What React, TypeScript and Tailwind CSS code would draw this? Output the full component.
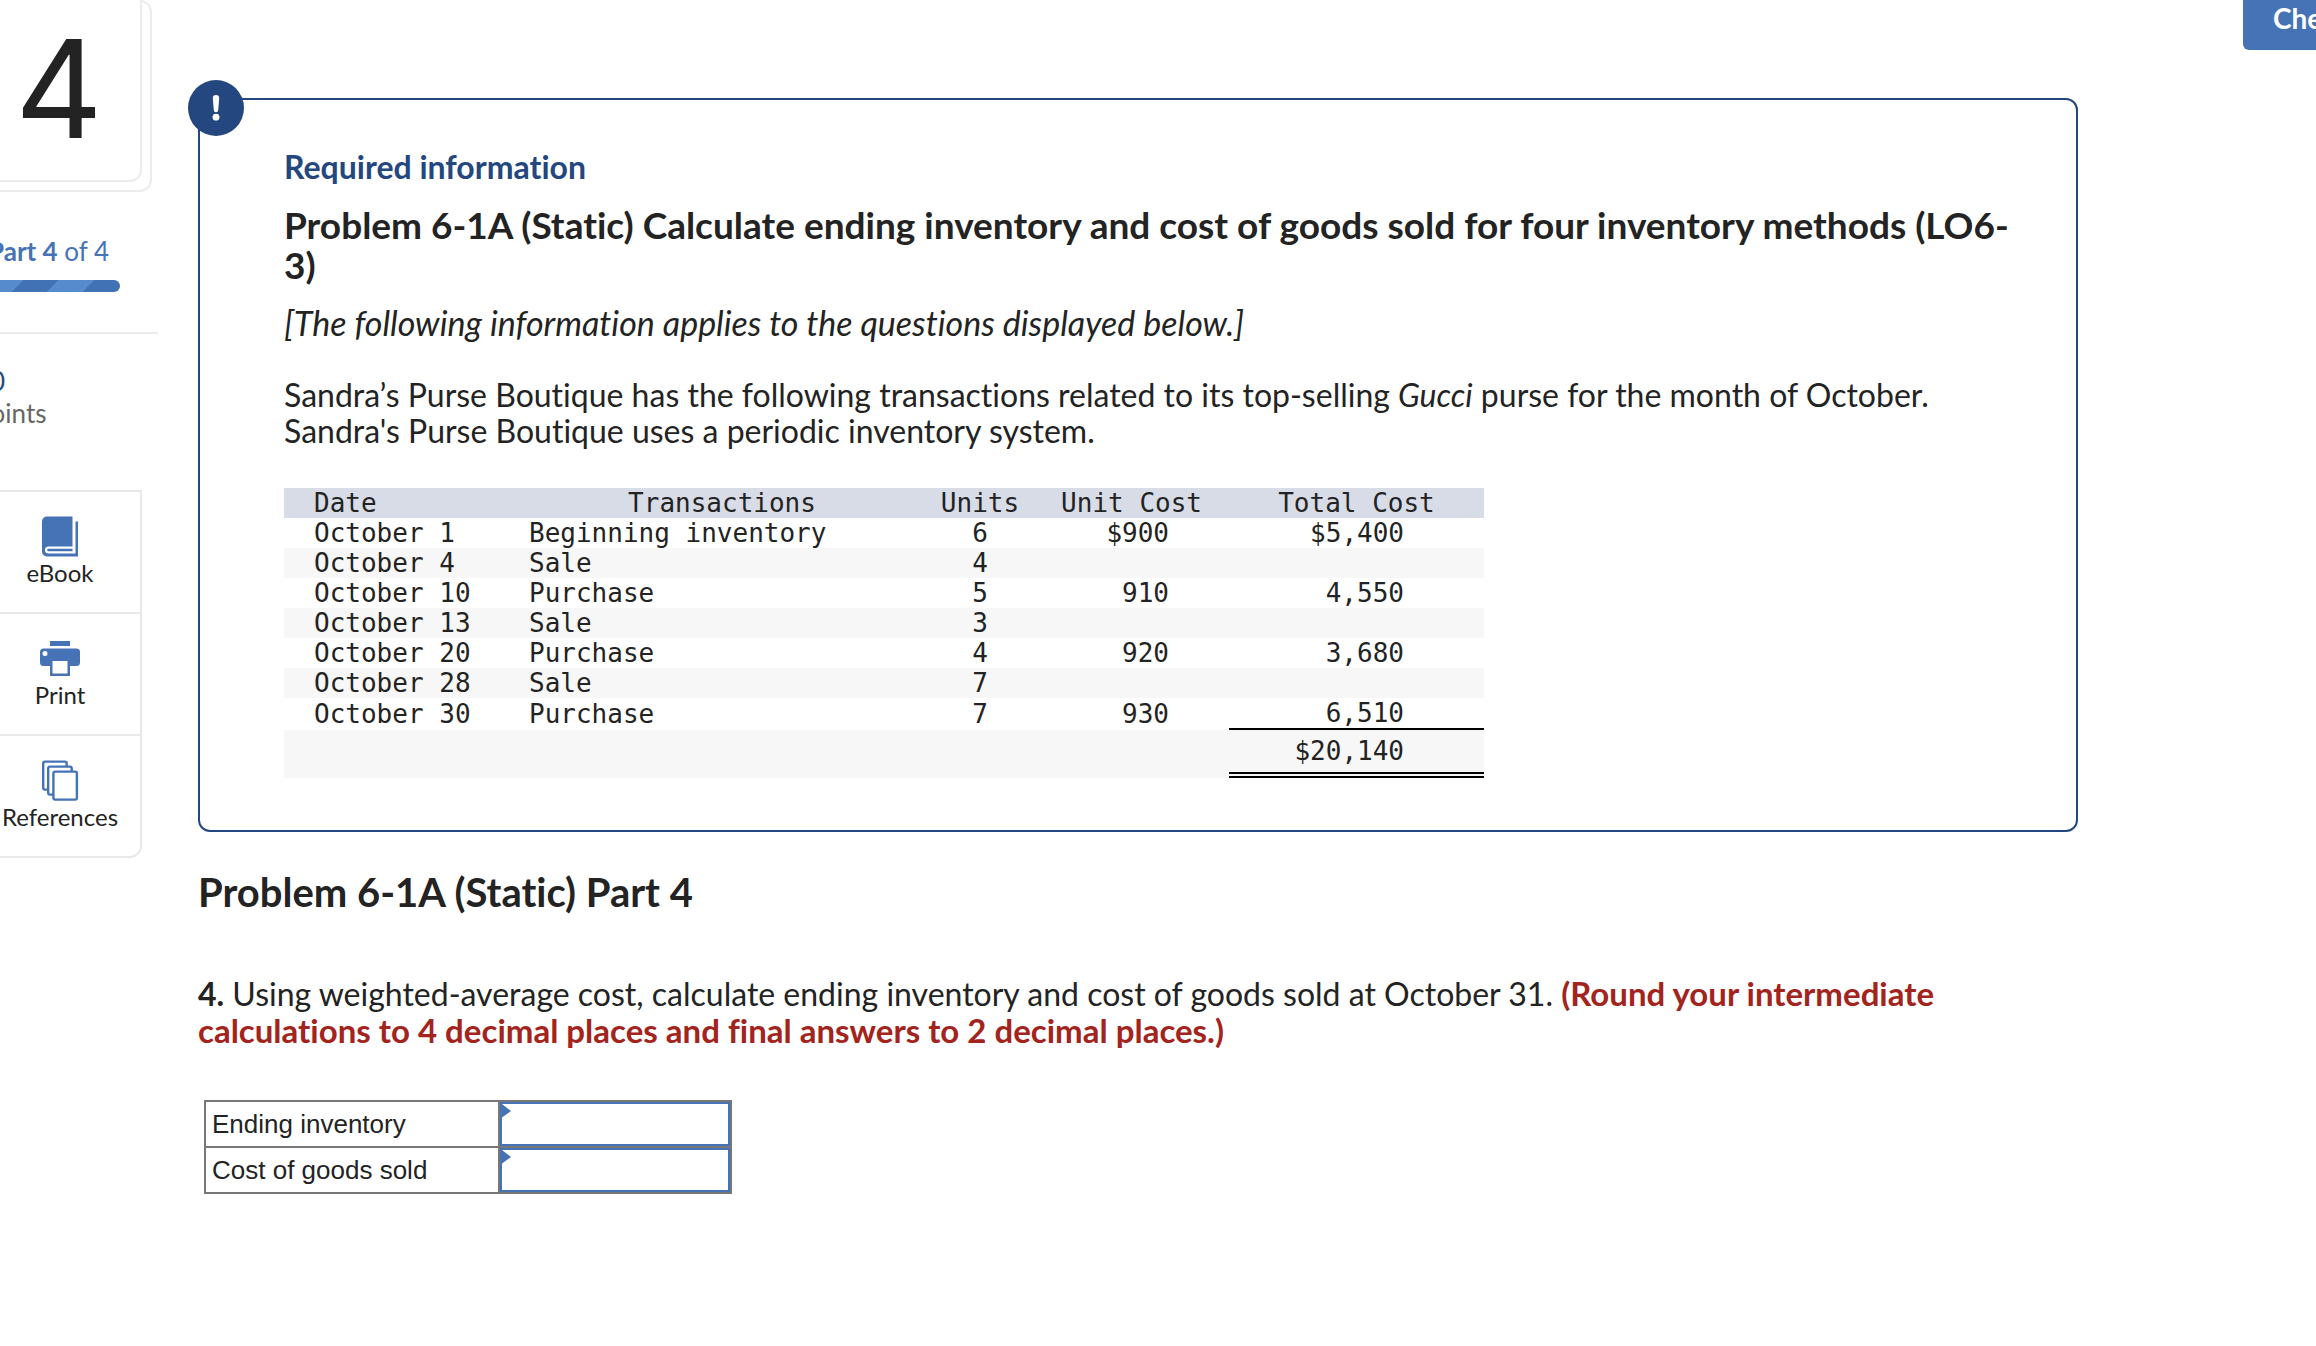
import { useState, type ReactNode } from 'react';
import { clsx } from 'clsx';

interface Transaction {
  date: string;
  label: string;
  units: number;
  unitCost?: string;
  totalCost?: string;
}

const transactions: Transaction[] = [
  { date: 'October 1', label: 'Beginning inventory', units: 6, unitCost: '$900', totalCost: '$5,400' },
  { date: 'October 4', label: 'Sale', units: 4 },
  { date: 'October 10', label: 'Purchase', units: 5, unitCost: '910', totalCost: '4,550' },
  { date: 'October 13', label: 'Sale', units: 3 },
  { date: 'October 20', label: 'Purchase', units: 4, unitCost: '920', totalCost: '3,680' },
  { date: 'October 28', label: 'Sale', units: 7 },
  { date: 'October 30', label: 'Purchase', units: 7, unitCost: '930', totalCost: '6,510' },
];

function BookIcon() {
  return (
    <svg viewBox="0 0 40 40" className="size-10 overflow-visible" fill="#4673b5" aria-hidden="true">
      <path d="M7 0.5H32.5V30.5H8.5a3.5 3.5 0 0 0 0 7H35.5V5.5H38V40.5H7a5 5 0 0 1-5-5V5.5a5 5 0 0 1 5-5Z" />
      <path d="M8.5 32.7H32.5V35.3H8.5a1.3 1.3 0 0 1 0-2.6Z" />
    </svg>
  );
}

function PrinterIcon() {
  return (
    <svg viewBox="0 0 40 40" className="size-10" fill="#4673b5" aria-hidden="true">
      <rect x="10" y="3" width="20" height="5" />
      <rect y="10.5" width="40" height="17.5" rx="3.5" />
      <rect x="10" y="22" width="20" height="16" />
      <rect x="12.5" y="23" width="15" height="12.5" fill="#fff" />
      <circle cx="5" cy="15.5" r="2.5" fill="#fff" />
    </svg>
  );
}

function PagesIcon() {
  return (
    <svg viewBox="0 0 40 40" className="size-10 overflow-visible" fill="#fff" stroke="#4673b5" strokeWidth="2.4" aria-hidden="true">
      <rect x="3.2" y="1.6" width="23.5" height="28" rx="1.8" />
      <rect x="8.2" y="6.6" width="23.5" height="28" rx="1.8" />
      <rect x="13.4" y="11.6" width="23.5" height="28" rx="1.8" />
    </svg>
  );
}

function ToolButton({ icon, label }: { icon: ReactNode; label: string }) {
  return (
    <button className="flex h-[122px] w-full flex-col items-center border-b-2 border-[#e9e9e9] pt-6 pl-0.5 text-[24px] leading-7 last:h-[120px] last:border-b-0">
      {icon}
      <span className="mt-[3px]">{label}</span>
    </button>
  );
}

function Sidebar() {
  return (
    <aside className="-ml-6 w-[182px] shrink-0">
      <div className="relative -mt-2.5 h-48 w-[166px]">
        <div className="absolute top-2.5 left-2.5 size-full rounded-xl border-2 border-[#ececec]" />
        <div className="relative flex h-full items-center justify-center rounded-xl border-2 border-[#ececec] bg-white pt-1.5">
          <span className="font-[Inter,sans-serif] text-[136px] leading-[140px]">4</span>
        </div>
      </div>

      <div className="mt-[54px] ml-3 w-[132px] text-[#4673b5]">
        <p className="text-[26px] leading-[30px]">
          <strong>Part 4</strong> of 4
        </p>
        <div className="mt-3.5 h-3 rounded-full bg-[repeating-linear-gradient(135deg,#568ccd_0_25px,#4072b5_25px_50px)]" />
      </div>

      <hr className="mt-10 border-t-2 border-[#ececec]" />

      <dl className="mt-[31px] text-[26px] leading-8">
        <dd className="pl-3.5 text-[#24477f]">0</dd>
        <dt className="text-[#666]">points</dt>
      </dl>

      <div className="mt-[61px] w-[166px] rounded-br-xl border-2 border-[#e9e9e9]">
        <ToolButton icon={<BookIcon />} label="eBook" />
        <ToolButton icon={<PrinterIcon />} label="Print" />
        <ToolButton icon={<PagesIcon />} label="References" />
      </div>
    </aside>
  );
}

function TransactionTable() {
  return (
    <table className="mt-[39px] w-[1200px] table-fixed border-separate border-spacing-0 font-['DejaVu_Sans_Mono',monospace] text-[26px] leading-[30px]">
      <colgroup>
        <col className="w-[215px]" />
        <col className="w-[446px]" />
        <col className="w-[70px]" />
        <col className="w-[214px]" />
        <col className="w-[255px]" />
      </colgroup>
      <thead>
        <tr className="bg-[#d8dce6]">
          <th className="p-0 pl-[30px] text-left font-normal">Date</th>
          <th className="p-0 text-center font-normal">Transactions</th>
          <th className="p-0 text-center font-normal">
            <span className="-mx-5">Units</span>
          </th>
          <th className="p-0 pr-[27px] text-right font-normal">Unit Cost</th>
          <th className="p-0 text-center font-normal">Total Cost</th>
        </tr>
      </thead>
      <tbody>
        {transactions.map((row, idx) => {
          const isLast = idx === transactions.length - 1;
          return (
            <tr key={row.date} className={clsx(idx % 2 === 1 && 'bg-[#f7f7f7]', isLast ? 'h-8' : 'h-[30px]')}>
              <td className="p-0 pl-[30px]">{row.date}</td>
              <td className="p-0 pl-[30px]">{row.label}</td>
              <td className="p-0 text-center">{row.units}</td>
              <td className="p-0 pr-[60px] text-right">{row.unitCost}</td>
              <td className={clsx('p-0 pr-20 text-right', isLast && 'border-b-2 border-black')}>{row.totalCost}</td>
            </tr>
          );
        })}
        <tr className="h-12 bg-[#f7f7f7]">
          <td colSpan={4} className="p-0" />
          <td className="border-b-6 border-double border-black p-0 pr-20 text-right">$20,140</td>
        </tr>
      </tbody>
    </table>
  );
}

function AnswerTable() {
  const [answers, setAnswers] = useState<Record<string, string>>({});

  return (
    <table className="mt-[51px] ml-1.5 w-[528px] table-fixed border-collapse border-2 border-[#777] font-['Liberation_Sans',Arial,sans-serif] text-[26px] leading-[30px]">
      <tbody>
        {['Ending inventory', 'Cost of goods sold'].map((name, idx) => (
          <tr key={name} className="h-[46px]">
            <th className="w-[294px] border-2 border-[#777] p-0 pl-1.5 text-left font-normal">
              <label htmlFor={`answer-${idx}`}>{name}</label>
            </th>
            <td className="relative border-2 border-[#777] p-0">
              <input
                id={`answer-${idx}`}
                value={answers[name] ?? ''}
                onChange={(e) => setAnswers({ ...answers, [name]: e.target.value })}
                className="block h-11 w-full border-2 border-[#4673b5] bg-white px-4 text-right outline-none"
              />
              <svg viewBox="0 0 10 14" className="absolute top-0.5 left-0.5 h-3.5 w-2.5" fill="#4673b5" aria-hidden="true">
                <path d="M0 0L9 7L0 13.5Z" />
              </svg>
            </td>
          </tr>
        ))}
      </tbody>
    </table>
  );
}

export default function App() {
  return (
    <div className="flex min-h-screen overflow-hidden bg-white font-[Lato,sans-serif] text-[#232323] [font-variant-ligatures:none]">
      <Sidebar />

      <main className="ml-10 min-w-0 flex-1 text-[32px] leading-9">
        <section className="relative mt-[98px] rounded-[12px] border-2 border-[#24477f] pt-[49px] pr-16 pb-[52px] pl-[84px]">
          <div className="absolute -top-5 -left-3 flex size-14 items-center justify-center rounded-full bg-[#24477f]">
            <svg viewBox="0 0 8 26" className="h-[26px] w-2" fill="#fff" aria-hidden="true">
              <path d="M0.8 3.2a3.2 3.2 0 0 1 6.4 0L6.2 15a2.2 2.2 0 0 1-4.4 0Z" />
              <circle cx="4" cy="22.2" r="3.4" />
            </svg>
          </div>
          <h2 className="font-bold text-[#24477f]">Required information</h2>
          <h1 className="mt-5 text-[37px] leading-10 font-bold">
            Problem 6-1A (Static) Calculate ending inventory and cost of goods sold for four inventory methods (LO6-
            <wbr />
            3)
          </h1>
          <p className="mt-5 text-[34px] italic">[The following information applies to the questions displayed below.]</p>
          <p className="mt-9">
            Sandra’s Purse Boutique has the following transactions related to its top-selling <em>Gucci</em> purse for the
            month of October.
            <br />
            Sandra's Purse Boutique uses a periodic inventory system.
          </p>
          <TransactionTable />
        </section>

        <h2 className="mt-[38px] text-[40px] leading-11 font-bold">Problem 6-1A (Static) Part 4</h2>
        <p className="mt-[61px] pr-32">
          <strong>4.</strong> Using weighted-average cost, calculate ending inventory and cost of goods sold at October 31.{' '}
          <strong className="text-[33px] text-[#a3231d]">
            (Round your intermediate calculations to 4 decimal places and final answers to 2 decimal places.)
          </strong>
        </p>
        <AnswerTable />
      </main>

      <div className="flex w-[238px] shrink-0 items-start pl-[165px]">
        <button className="h-[50px] shrink-0 rounded-b-md bg-[#4673b5] px-[30px] pb-3.5 text-[28px] leading-9 font-bold whitespace-nowrap text-white">
          Check my work
        </button>
      </div>
    </div>
  );
}
